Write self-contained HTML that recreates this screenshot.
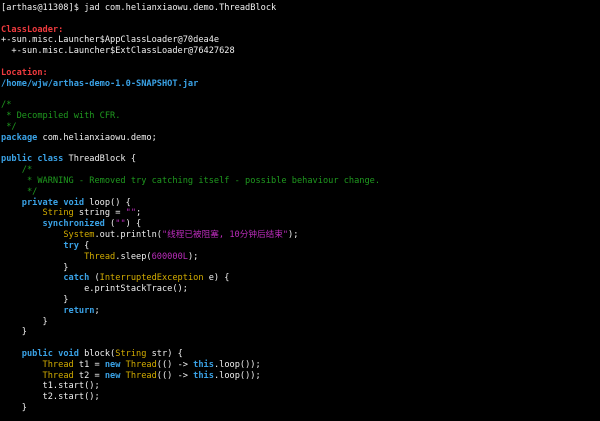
<!DOCTYPE html>
<html><head><meta charset="utf-8"><style>
html,body{margin:0;padding:0;background:#000;width:600px;height:421px;overflow:hidden}
pre{margin:0;padding:3px 0 0 1px;font-family:"DejaVu Sans Mono","Liberation Mono","Noto Sans CJK SC",monospace;font-size:8.65px;line-height:10.82px;color:#f0f0f0;white-space:pre}
.r{color:#ee3a3e;font-weight:bold}.b{color:#3aa2e6;font-weight:bold}.p{color:#3aa2e6}.g{color:#1f9a1f}.y{color:#d2ac00}.m{color:#bb2cbb}
</style></head><body><pre>[arthas@11308]$ jad com.helianxiaowu.demo.ThreadBlock

<span class="r">ClassLoader:</span>
+-sun.misc.Launcher$AppClassLoader@70dea4e
  +-sun.misc.Launcher$ExtClassLoader@76427628

<span class="r">Location:</span>
<span class="b">/home/wjw/arthas-demo-1.0-SNAPSHOT.jar</span>

<span class="g">/*
 * Decompiled with CFR.
 */</span>
<span class="b">package</span> com.helianxiaowu.demo;

<span class="b">public class</span> ThreadBlock {
    <span class="g">/*
     * WARNING - Removed try catching itself - possible behaviour change.
     */</span>
    <span class="b">private void</span> loop() {
        <span class="y">String</span> string = <span class="m">""</span>;
        <span class="b">synchronized</span> (<span class="m">""</span>) {
            <span class="y">System</span>.out.println(<span class="m">"线程已被阻塞, 10分钟后结束"</span>);
            <span class="b">try</span> {
                <span class="y">Thread</span>.sleep(<span class="m">600000L</span>);
            }
            <span class="b">catch</span> (<span class="y">InterruptedException</span> e) {
                e.printStackTrace();
            }
            <span class="b">return</span>;
        }
    }

    <span class="b">public void</span> block(<span class="y">String</span> str) {
        <span class="y">Thread</span> t1 = <span class="b">new</span> <span class="y">Thread</span>(() -&gt; <span class="b">this</span>.loop());
        <span class="y">Thread</span> t2 = <span class="b">new</span> <span class="y">Thread</span>(() -&gt; <span class="b">this</span>.loop());
        t1.start();
        t2.start();
    }
</pre></body></html>
